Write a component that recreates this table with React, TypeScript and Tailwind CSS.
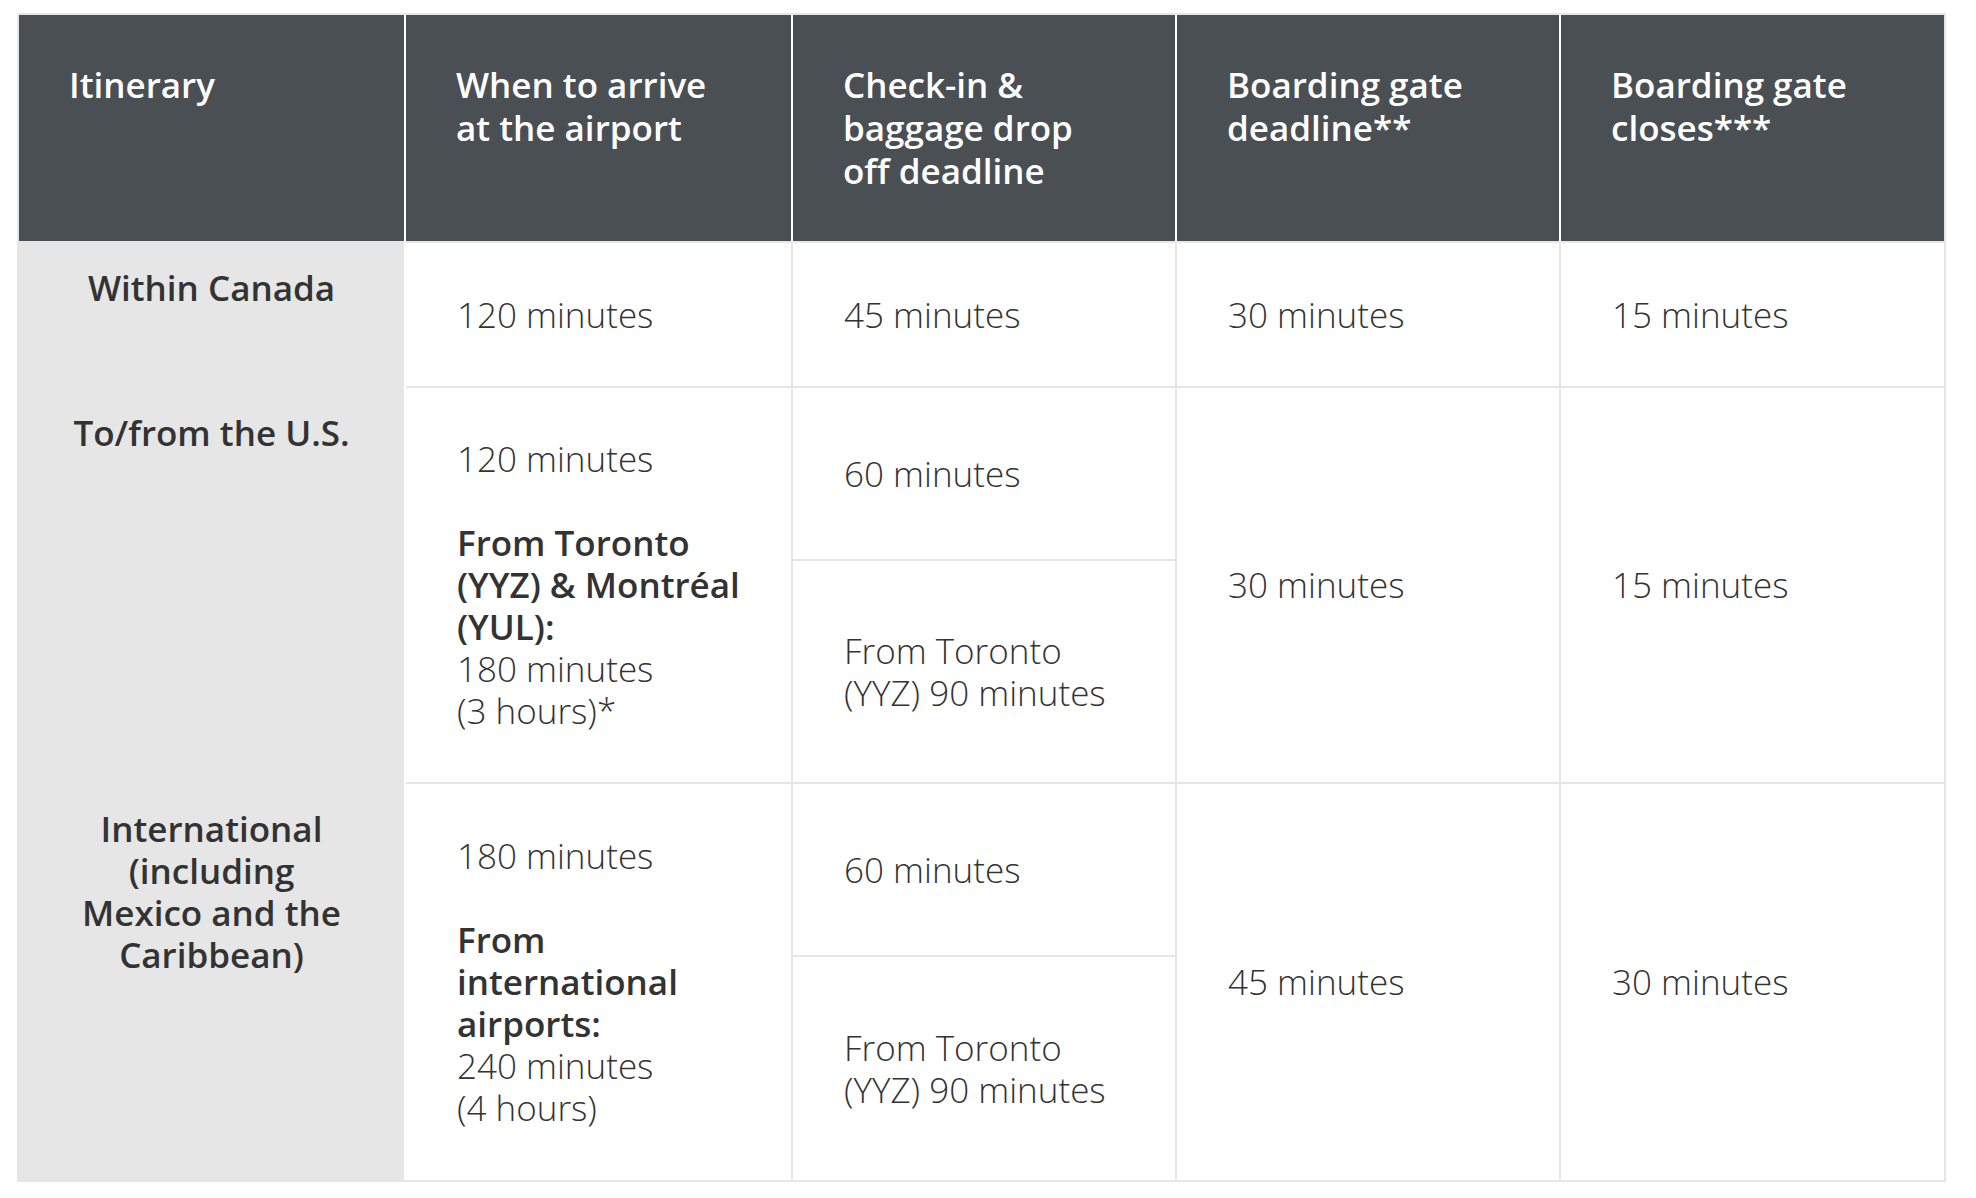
const head = 'bg-[#4a4f54] text-white font-semibold px-[50px] pt-[48px] leading-[43px] border-b-2 border-[#e6e6e6]'
const side = 'bg-[#e6e6e6] border-r-2 border-white text-center font-semibold px-[20px] pt-[24px] col-start-1'
const cell = 'flex flex-col justify-center px-[51px] font-light border-[#e6e6e6]'

export default function App() {
  return (
    <div className="min-h-screen bg-white pt-[13px] pl-[17px] font-['Open_Sans',sans-serif] text-[35px] leading-[42px] text-[#333333]">
      <div className="w-[1929px] border-2 border-[#e6e6e6] grid grid-cols-[387px_387px_384px_384px_1fr] grid-rows-[228px_145px_173px_223px_173px_223px]">
        {/* Header */}
        <div className={`${head} border-r-2 border-r-white`}>Itinerary</div>
        <div className={`${head} border-r-2 border-r-white`}>
          When to arrive
          <br />
          at the airport
        </div>
        <div className={`${head} border-r-2 border-r-white`}>
          Check-in &amp;
          <br />
          baggage drop
          <br />
          off deadline
        </div>
        <div className={`${head} border-r-2 border-r-white`}>
          Boarding gate
          <br />
          deadline**
        </div>
        <div className={head}>
          Boarding gate
          <br />
          closes***
        </div>

        {/* Itinerary column */}
        <div className={`${side} row-start-2`}>Within Canada</div>
        <div className={`${side} row-start-3 row-span-2`}>To/from the U.S.</div>
        <div className={`${side} row-start-5 row-span-2`}>
          International
          <br />
          (including
          <br />
          Mexico and the
          <br />
          Caribbean)
        </div>

        {/* Within Canada */}
        <div className={`${cell} col-start-2 row-start-2 border-r-2 border-b-2`}>120 minutes</div>
        <div className={`${cell} col-start-3 row-start-2 border-r-2 border-b-2`}>45 minutes</div>
        <div className={`${cell} col-start-4 row-start-2 border-r-2 border-b-2`}>30 minutes</div>
        <div className={`${cell} col-start-5 row-start-2 border-b-2`}>15 minutes</div>

        {/* To/from the U.S. */}
        <div className={`${cell} col-start-2 row-start-3 row-span-2 border-r-2 border-b-2`}>
          <p>120 minutes</p>
          <p className="mt-[42px] font-semibold whitespace-nowrap">
            From Toronto
            <br />
            (YYZ) &amp; Montréal
            <br />
            (YUL):
          </p>
          <p className="whitespace-nowrap">
            180 minutes
            <br />
            (3 hours)*
          </p>
        </div>
        <div className={`${cell} col-start-3 row-start-3 border-r-2 border-b-2`}>60 minutes</div>
        <div className={`${cell} col-start-3 row-start-4 border-r-2 border-b-2`}>
          <p className="whitespace-nowrap">
            From Toronto
            <br />
            (YYZ) 90 minutes
          </p>
        </div>
        <div className={`${cell} col-start-4 row-start-3 row-span-2 border-r-2 border-b-2`}>30 minutes</div>
        <div className={`${cell} col-start-5 row-start-3 row-span-2 border-b-2`}>15 minutes</div>

        {/* International */}
        <div className={`${cell} col-start-2 row-start-5 row-span-2 border-r-2`}>
          <p>180 minutes</p>
          <p className="mt-[42px] font-semibold whitespace-nowrap">
            From
            <br />
            international
            <br />
            airports:
          </p>
          <p className="whitespace-nowrap">
            240 minutes
            <br />
            (4 hours)
          </p>
        </div>
        <div className={`${cell} col-start-3 row-start-5 border-r-2 border-b-2`}>60 minutes</div>
        <div className={`${cell} col-start-3 row-start-6 border-r-2`}>
          <p className="whitespace-nowrap">
            From Toronto
            <br />
            (YYZ) 90 minutes
          </p>
        </div>
        <div className={`${cell} col-start-4 row-start-5 row-span-2 border-r-2`}>45 minutes</div>
        <div className={`${cell} col-start-5 row-start-5 row-span-2`}>30 minutes</div>
      </div>
    </div>
  )
}
